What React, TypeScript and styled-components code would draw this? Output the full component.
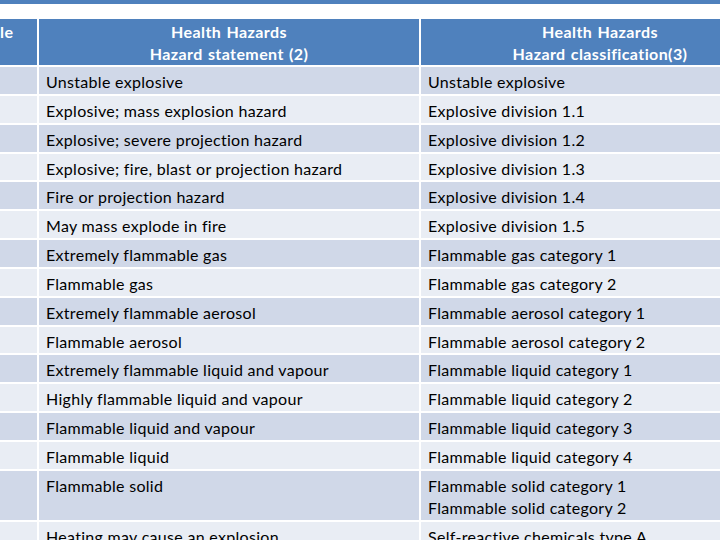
import styled, { createGlobalStyle } from "styled-components";

const Global = createGlobalStyle`
  html, body { margin: 0; padding: 0; background: #ffffff; }
  body { font-family: Lato, "Liberation Sans", sans-serif; }
`;

const Page = styled.div`
  width: 720px;
  height: 540px;
  overflow: hidden;
  background: #ffffff;
`;

const TopBar = styled.div`
  height: 4px;
  background: #4f81bd;
  margin-bottom: 15px;
`;

// the slide's table runs past the right edge of the window
const Grid = styled.div`
  display: grid;
  grid-template-columns: 37px 380px 358px;
  width: 779px;
  gap: 2px;
`;

const HeadCell = styled.div<{ $align?: string }>`
  background: #4f81bd;
  color: #ffffff;
  font-weight: 700;
  font-size: 16px;
  line-height: 22px;
  letter-spacing: 0.4px;
  word-spacing: 1px;
  font-variant-ligatures: none;
  padding: 2px 0 0;
  height: 44px;
  text-align: ${(p) => p.$align || "center"};
  white-space: nowrap;
  overflow: hidden;
`;

const Cell = styled.div<{ $dark: boolean }>`
  background: ${(p) => (p.$dark ? "#d0d8e8" : "#e9edf4")};
  color: #000000;
  font-size: 16px;
  line-height: 22px;
  letter-spacing: 0.3px;
  padding: 4px 7px 0.85px;
  white-space: nowrap;
  overflow: hidden;
`;

const rows: [string, string][] = [
  ["Unstable explosive", "Unstable explosive"],
  ["Explosive; mass explosion hazard", "Explosive division 1.1"],
  ["Explosive; severe projection hazard", "Explosive division 1.2"],
  ["Explosive; fire, blast or projection hazard", "Explosive division 1.3"],
  ["Fire or projection hazard", "Explosive division 1.4"],
  ["May mass explode in fire", "Explosive division 1.5"],
  ["Extremely flammable gas", "Flammable gas category 1"],
  ["Flammable gas", "Flammable gas category 2"],
  ["Extremely flammable aerosol", "Flammable aerosol category 1"],
  ["Flammable aerosol", "Flammable aerosol category 2"],
  ["Extremely flammable liquid and vapour", "Flammable liquid category 1"],
  ["Highly flammable liquid and vapour", "Flammable liquid category 2"],
  ["Flammable liquid and vapour", "Flammable liquid category 3"],
  ["Flammable liquid", "Flammable liquid category 4"],
  ["Flammable solid", "Flammable solid category 1\nFlammable solid category 2"],
  ["Heating may cause an explosion", "Self-reactive chemicals type A"],
];

export default function App() {
  return (
    <Page>
      <Global />
      <TopBar />
      <Grid>
        <HeadCell $align="left">le</HeadCell>
        <HeadCell>
          Health Hazards
          <br />
          Hazard statement (2)
        </HeadCell>
        <HeadCell>
          Health Hazards
          <br />
          Hazard classification(3)
        </HeadCell>
        {rows.map(([statement, classification], i) => {
          const dark = i % 2 === 0;
          const lines = classification.split("\n");
          return [
            <Cell key={`a${i}`} $dark={dark} />,
            <Cell key={`b${i}`} $dark={dark}>{statement}</Cell>,
            <Cell key={`c${i}`} $dark={dark}>
              {lines.map((l, j) => (
                <div key={j}>{l}</div>
              ))}
            </Cell>,
          ];
        })}
      </Grid>
    </Page>
  );
}
